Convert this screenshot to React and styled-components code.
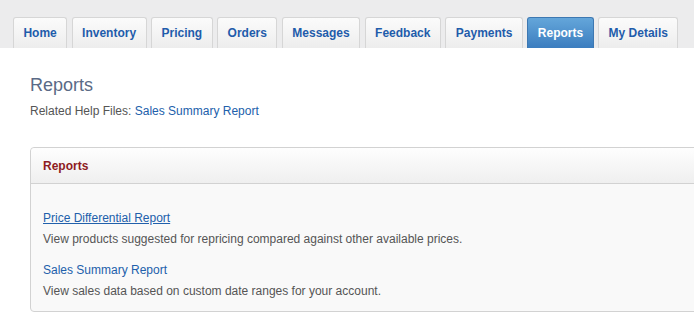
import React from "react";
import styled, { createGlobalStyle } from "styled-components";

const Global = createGlobalStyle`
  body {
    margin: 0;
    background: #fff;
    font-family: "Liberation Sans", Arial, sans-serif;
  }
`;

const TabBar = styled.nav`
  background: #ececed;
  height: 48px;
  display: flex;
  align-items: flex-end;
  padding-left: 13px;
  gap: 4.6px;
  overflow: hidden;
`;

const Tab = styled.a`
  display: flex;
  align-items: center;
  height: 30px;
  padding: 0 9.4px;
  border: 1px solid ${p => (p.active ? "#3d78b2" : "#d6d6d6")};
  border-bottom: none;
  border-radius: 3px 3px 0 0;
  background: ${p =>
    p.active
      ? "linear-gradient(to bottom, #64a6da, #3b7dbf)"
      : "linear-gradient(to bottom, #fbfbfb, #ededed)"};
  color: ${p => (p.active ? "#fff" : "#1f5cab")};
  font-size: 12px;
  font-weight: bold;
  text-decoration: none;
  white-space: nowrap;
`;

const Main = styled.main`
  padding: 26px 0 0 30px;
`;

const Title = styled.h1`
  margin: 0;
  font-size: 18px;
  font-weight: normal;
  color: #5a6a86;
  line-height: 22px;
`;

const Help = styled.p`
  margin: 8px 0 0;
  font-size: 12px;
  color: #555;
  line-height: 14px;
`;

const Link = styled.a`
  color: #2160ab;
  text-decoration: ${p => (p.underline ? "underline" : "none")};
`;

const Panel = styled.section`
  margin-top: 29px;
  margin-right: -6px;
  border: 1px solid #d2d2d2;
  border-radius: 4px;
  background: #f9f9f9;
`;

const PanelHead = styled.header`
  height: 35px;
  display: flex;
  align-items: center;
  padding-left: 12px;
  border-bottom: 1px solid #d2d2d2;
  background: linear-gradient(to bottom, #fefefe, #efefef);
  border-radius: 4px 4px 0 0;
  color: #8e1b22;
  font-size: 12px;
  font-weight: bold;
`;

const PanelBody = styled.div`
  padding: 27px 12px 13px;
`;

const Item = styled.div`
  font-size: 12px;
  line-height: 14px;
  & + & {
    margin-top: 17px;
  }
`;

const Desc = styled.div`
  margin-top: 7px;
  color: #555;
`;

const tabs = [
  "Home",
  "Inventory",
  "Pricing",
  "Orders",
  "Messages",
  "Feedback",
  "Payments",
  "Reports",
  "My Details",
];

const reports = [
  {
    name: "Price Differential Report",
    desc: "View products suggested for repricing compared against other available prices.",
    underline: true,
  },
  {
    name: "Sales Summary Report",
    desc: "View sales data based on custom date ranges for your account.",
  },
];

export default function App() {
  return (
    <>
      <Global />
      <TabBar>
        {tabs.map(t => (
          <Tab key={t} active={t === "Reports"} href="#">
            {t}
          </Tab>
        ))}
      </TabBar>
      <Main>
        <Title>Reports</Title>
        <Help>
          Related Help Files: <Link href="#">Sales Summary Report</Link>
        </Help>
        <Panel>
          <PanelHead>Reports</PanelHead>
          <PanelBody>
            {reports.map(r => (
              <Item key={r.name}>
                <Link href="#" underline={r.underline}>
                  {r.name}
                </Link>
                <Desc>{r.desc}</Desc>
              </Item>
            ))}
          </PanelBody>
        </Panel>
      </Main>
    </>
  );
}
